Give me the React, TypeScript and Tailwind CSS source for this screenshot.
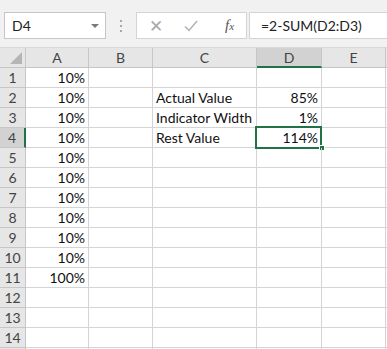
import React from 'react';

const cols = ['A', 'B', 'C', 'D', 'E'];
const colW = ['w-[63px]', 'w-[64px]', 'w-[104px]', 'w-[65px]', 'w-[64px]'];

type Row = { a?: string; c?: string; d?: string };

const rows: Row[] = [
    { a: '10%' },
    { a: '10%', c: 'Actual Value', d: '85%' },
    { a: '10%', c: 'Indicator Width', d: '1%' },
    { a: '10%', c: 'Rest Value', d: '114%' },
    { a: '10%' },
    { a: '10%' },
    { a: '10%' },
    { a: '10%' },
    { a: '10%' },
    { a: '10%' },
    { a: '100%' },
    {},
    {},
    {},
    {},
];

const FormulaBar: React.FC = () => (
    <div className="flex items-start h-[47px] bg-[#f1f1f1] pt-[12px] pl-[4px]">
        <div className="flex items-center justify-between w-[102px] h-[27px] bg-white border border-[#c6c6c6] pl-[7px] pr-[6px]">
            <span className="text-[14px] text-[#222]">D4</span>
            <span className="w-0 h-0 border-l-[4px] border-r-[4px] border-t-[4px] border-l-transparent border-r-transparent border-t-[#7a7a7a]" />
        </div>
        <div className="flex flex-col items-center justify-center gap-[3px] w-[30px] h-[27px]">
            <span className="w-[2px] h-[2px] bg-[#a8a8a8]" />
            <span className="w-[2px] h-[2px] bg-[#a8a8a8]" />
            <span className="w-[2px] h-[2px] bg-[#a8a8a8]" />
        </div>
        <div className="flex items-center w-[111px] h-[27px] bg-white border border-[#d4d4d4]">
            <span className="ml-[12px] text-[17px] text-[#a8a8a8] leading-none">✕</span>
            <svg className="ml-[21px]" width="14" height="12" viewBox="0 0 14 12">
                <path d="M1 6.5 L5 10.5 L13 1" fill="none" stroke="#b0b0b0" strokeWidth="1.4" />
            </svg>
            <span className="ml-[27px] text-[15px] italic text-[#555] leading-none" style={{ fontFamily: '"Liberation Serif", serif' }}>
                f<span className="text-[11px]">x</span>
            </span>
        </div>
        <div className="flex items-center flex-1 h-[27px] ml-[2px] bg-white border border-[#d4d4d4] border-r-0 pl-[11px]">
            <span className="text-[14px] text-[#222]">=2-SUM(D2:D3)</span>
        </div>
    </div>
);

const App: React.FC = () => {
    return (
        <div className="w-[387px] h-[349px] overflow-hidden bg-white" style={{ fontFamily: 'Lato, "Liberation Sans", sans-serif' }}>
            <FormulaBar />

            {/* column headers */}
            <div className="flex h-[21px] bg-[#e6e6e6] border-t border-[#d9d9d9]">
                <div className="relative w-[26px] shrink-0 border-r border-b border-[#c6c6c6]">
                    <span className="absolute right-[3px] bottom-[3px] w-0 h-0 border-l-transparent border-b-[#b5b5b5]" style={{ borderBottomWidth: 12, borderLeftWidth: 12, borderTopWidth: 0, borderRightWidth: 0 }} />
                </div>
                {cols.map((c, i) => (
                    <div
                        key={c}
                        className={`${colW[i]} shrink-0 flex items-center justify-center text-[14px] text-[#444] border-r border-[#c6c6c6] ${
                            c === 'D' ? 'bg-[#d2d2d2] border-b-2 border-b-[#217346]' : 'border-b border-b-[#c6c6c6]'
                        }`}
                    >
                        {c}
                    </div>
                ))}
                <div className="flex-1 border-b border-[#c6c6c6]" />
            </div>

            {/* rows */}
            {rows.map((r, i) => {
                const n = i + 1;
                const sel = n === 4;
                return (
                    <div key={n} className="flex h-[20px]">
                        <div
                            className={`w-[26px] shrink-0 flex items-center justify-center text-[14px] text-[#444] border-b border-[#c6c6c6] ${
                                sel ? 'bg-[#d2d2d2] border-r-2 border-r-[#217346]' : 'bg-[#e6e6e6] border-r border-r-[#c6c6c6]'
                            }`}
                        >
                            {n < 15 ? n : ''}
                        </div>
                        <div className="w-[63px] shrink-0 flex items-end justify-end pr-[3px] text-[14px] leading-[19px] text-[#111] border-r border-b border-[#d4d4d4]">
                            {r.a}
                        </div>
                        <div className="w-[64px] shrink-0 border-r border-b border-[#d4d4d4]" />
                        <div className="w-[104px] shrink-0 flex items-end pl-[3px] text-[14px] leading-[19px] text-[#111] whitespace-nowrap border-r border-b border-[#d4d4d4]">
                            {r.c}
                        </div>
                        <div className="relative w-[65px] shrink-0 flex items-end justify-end pr-[3px] text-[14px] leading-[19px] text-[#111] border-r border-b border-[#d4d4d4]">
                            {r.d}
                            {sel && (
                                <>
                                    <span className="absolute -left-[2px] -top-[2px] w-[67px] h-[23px] border-2 border-[#217346]" />
                                    <span className="absolute -right-[4px] -bottom-[4px] w-[6px] h-[6px] bg-[#217346] border border-white" />
                                </>
                            )}
                        </div>
                        <div className="w-[64px] shrink-0 border-r border-b border-[#d4d4d4]" />
                        <div className="flex-1 border-b border-[#d4d4d4]" />
                    </div>
                );
            })}
        </div>
    );
};

export default App;
